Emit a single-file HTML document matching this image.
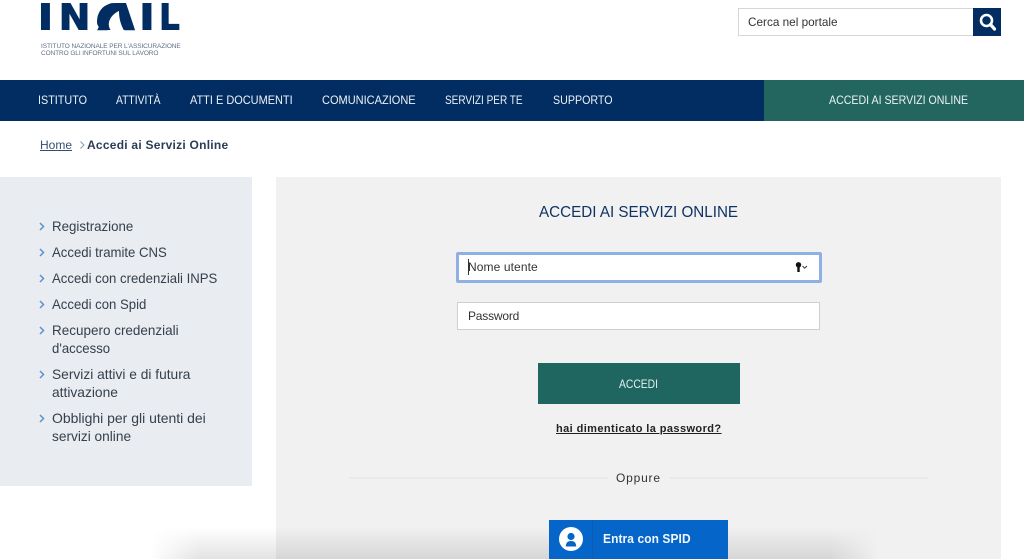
<!DOCTYPE html>
<html lang="it">
<head>
<meta charset="utf-8">
<title>INAIL - Accedi ai Servizi Online</title>
<style>
html,body{margin:0;padding:0;width:1024px;height:559px;overflow:hidden;background:#fff}
body{position:relative;font-family:"Liberation Sans",sans-serif;color:#2e3a47}
.t,.a{position:absolute;white-space:nowrap}
.a{display:block}
.t{line-height:18px;transform-origin:left center}
.nav{position:absolute;left:0;top:80px;width:1024px;height:41px;background:#012d62}
.nav .t{top:11px;color:#eef2f6;font-size:12px}
.green{position:absolute;left:764px;top:0;width:260px;height:41px;background:#22665f}
.side{position:absolute;left:0;top:177px;width:252px;height:309px;background:#e9ecf1}
.side .t{left:52px;font-size:14px;color:#35404c;transform:scaleX(.94)}
.side svg{position:absolute;left:39px}
.panel{position:absolute;left:276px;top:177px;width:725px;height:382px;background:#f1f1f2}
.input{position:absolute;background:#fff;box-sizing:border-box}
.shade{position:absolute;left:150px;top:527px;width:730px;height:32px;background:linear-gradient(to bottom,rgba(0,0,0,0),rgba(0,0,0,.11));-webkit-mask-image:linear-gradient(to right,transparent 0,#000 50px,#000 680px,transparent 100%);mask-image:linear-gradient(to right,transparent 0,#000 50px,#000 680px,transparent 100%)}
</style>
</head>
<body>

<svg class="a" style="left:0;top:0" width="200" height="40" viewBox="0 0 200 40">
  <g fill="#012d62" stroke="#012d62" font-family="'DejaVu Sans',sans-serif" font-weight="700" font-size="36" text-anchor="middle">
    <text transform="translate(45.500 29.700) scale(1.150 1)" stroke-width="1">I</text>
    <text transform="translate(74.500 29.700) scale(1.050 1)" stroke-width="1">N</text>
    <text transform="translate(116 29.700) scale(1.300 1)" stroke-width="1">A</text>
    <text transform="translate(147 29.700) scale(1.150 1)" stroke-width="1">I</text>
    <text transform="translate(169.500 29.700) scale(.9 1)" stroke-width="1">L</text>
  </g>
  <path d="M97 22C97 11 104 3 116 3L126 3L135 30L104 30C100 29 97 26 97 22Z" fill="#012d62"/>
  <path d="M119 11C110 15 106 24 111 30.500L124 30.500C120.500 24 119 18 119 11Z" fill="#fff"/>
</svg>
<div class="t" style="left:41px;top:43px;font-size:6.500px;line-height:7px;letter-spacing:-.09px;color:#5f7084">ISTITUTO NAZIONALE PER L'ASSICURAZIONE<br>CONTRO GLI INFORTUNI SUL LAVORO</div>

<div class="input" style="left:738px;top:8px;width:236px;height:28px;border:1px solid #d4d6d8"></div>
<div class="t" style="left:748px;top:13px;font-size:12px;transform:scaleX(.98);color:#333">Cerca nel portale</div>
<div class="a" style="left:973px;top:8px;width:28px;height:28px;background:#012d62"></div>
<svg class="a" style="left:973px;top:8px" width="28" height="28" viewBox="0 0 28 28">
  <circle cx="13.500" cy="12.500" r="5.500" fill="none" stroke="#fff" stroke-width="2.600"/>
  <path d="M17.500 16.500L21.500 21" stroke="#fff" stroke-width="3.200" stroke-linecap="round"/>
</svg>

<nav class="nav">
  <span class="t" style="left:38px;transform:scaleX(.9)">ISTITUTO</span>
  <span class="t" style="left:116px;transform:scaleX(.86)">ATTIVITÀ</span>
  <span class="t" style="left:190px;transform:scaleX(.913)">ATTI E DOCUMENTI</span>
  <span class="t" style="left:322px;transform:scaleX(.918)">COMUNICAZIONE</span>
  <span class="t" style="left:445px;transform:scaleX(.835)">SERVIZI PER TE</span>
  <span class="t" style="left:553px;transform:scaleX(.89)">SUPPORTO</span>
  <div class="green"><span class="t" style="left:65px;transform:scaleX(.885)">ACCEDI AI SERVIZI ONLINE</span></div>
</nav>

<div class="t" style="left:40px;top:136px;font-size:12px;color:#35506f;text-decoration:underline">Home</div>
<svg class="a" style="left:79px;top:140px" width="7" height="10" viewBox="0 0 7 10"><path d="M1.500 1.500L5 5L1.500 8.500" fill="none" stroke="#8a97a6" stroke-width="1"/></svg>
<div class="t" style="left:87px;top:136px;font-size:12px;font-weight:700;letter-spacing:.25px;color:#2b3d55">Accedi ai Servizi Online</div>

<aside class="side">
  <svg style="top:45px" width="6" height="9" viewBox="0 0 6 9"><path d="M1 1L4.500 4.500L1 8" fill="none" stroke="#5b93cf" stroke-width="1.500"/></svg>
  <span class="t" style="top:40px;transform:scaleX(.95)">Registrazione</span>
  <svg style="top:71px" width="6" height="9" viewBox="0 0 6 9"><path d="M1 1L4.500 4.500L1 8" fill="none" stroke="#5b93cf" stroke-width="1.500"/></svg>
  <span class="t" style="top:66px">Accedi tramite CNS</span>
  <svg style="top:97px" width="6" height="9" viewBox="0 0 6 9"><path d="M1 1L4.500 4.500L1 8" fill="none" stroke="#5b93cf" stroke-width="1.500"/></svg>
  <span class="t" style="top:92px">Accedi con credenziali INPS</span>
  <svg style="top:123px" width="6" height="9" viewBox="0 0 6 9"><path d="M1 1L4.500 4.500L1 8" fill="none" stroke="#5b93cf" stroke-width="1.500"/></svg>
  <span class="t" style="top:118px">Accedi con Spid</span>
  <svg style="top:149px" width="6" height="9" viewBox="0 0 6 9"><path d="M1 1L4.500 4.500L1 8" fill="none" stroke="#5b93cf" stroke-width="1.500"/></svg>
  <span class="t" style="top:144px;transform:scaleX(.963)">Recupero credenziali</span>
  <span class="t" style="top:162px">d'accesso</span>
  <svg style="top:193px" width="6" height="9" viewBox="0 0 6 9"><path d="M1 1L4.500 4.500L1 8" fill="none" stroke="#5b93cf" stroke-width="1.500"/></svg>
  <span class="t" style="top:188px;transform:scaleX(.983)">Servizi attivi e di futura</span>
  <span class="t" style="top:206px;transform:scaleX(.985)">attivazione</span>
  <svg style="top:237px" width="6" height="9" viewBox="0 0 6 9"><path d="M1 1L4.500 4.500L1 8" fill="none" stroke="#5b93cf" stroke-width="1.500"/></svg>
  <span class="t" style="top:232px;transform:scaleX(.998)">Obblighi per gli utenti dei</span>
  <span class="t" style="top:250px;transform:scaleX(.977)">servizi online</span>
</aside>

<main class="panel"></main>

<div class="t" style="left:539px;top:204px;font-size:16px;transform:scaleX(.95);color:#0f3463">ACCEDI AI SERVIZI ONLINE</div>

<div class="input" style="left:456px;top:252px;width:366px;height:31px;border:3px solid #8fb0e3;border-radius:2px"></div>
<div class="a" style="left:468px;top:259px;width:1px;height:16px;background:#333"></div>
<div class="t" style="left:468px;top:258px;font-size:12px;letter-spacing:.1px;color:#333">Nome utente</div>
<svg class="a" style="left:794px;top:261px" width="16" height="12" viewBox="0 0 16 12">
  <circle cx="4.500" cy="3.800" r="2.700" fill="#111"/>
  <path d="M3.300 4.500L3.300 11L5.700 11L5.700 4.500Z" fill="#111"/>
  <path d="M8.500 5L10.700 7.200L12.900 5" fill="none" stroke="#333" stroke-width="1"/>
</svg>

<div class="input" style="left:457px;top:302px;width:363px;height:28px;border:1px solid #cfcfcf"></div>
<div class="t" style="left:468px;top:307px;font-size:12px;letter-spacing:-.2px;color:#333">Password</div>

<div class="a" style="left:538px;top:363px;width:202px;height:41px;background:#1f6661"></div>
<div class="t" style="left:619px;top:375px;font-size:12px;transform:scaleX(.86);color:#e6f0ee">ACCEDI</div>

<div class="t" style="left:556px;top:420px;font-size:11px;font-weight:700;letter-spacing:.41px;color:#222;text-decoration:underline">hai dimenticato la password?</div>

<div class="a" style="left:349px;top:477px;width:579px;height:2px;background:#e9e9ea"></div>
<div class="a" style="left:608px;top:468px;width:62px;height:20px;background:#f1f1f2"></div>
<div class="t" style="left:616px;top:469px;font-size:12px;letter-spacing:.8px;color:#333">Oppure</div>

<div class="shade"></div>

<div class="a" style="left:549px;top:520px;width:179px;height:39px;background:#0565c9"></div>
<div class="a" style="left:592px;top:520px;width:1px;height:39px;background:#0f5cb3"></div>
<svg class="a" style="left:558px;top:526px" width="26" height="26" viewBox="0 0 26 26">
  <circle cx="13" cy="13" r="12" fill="#fff"/>
  <circle cx="13" cy="10.500" r="3.600" fill="#0565c9"/>
  <path d="M7.800 20.500C7.800 16.500 10 15 13 15C16 15 18.200 16.500 18.200 20.500Z" fill="#0565c9"/>
</svg>
<div class="t" style="left:603px;top:530px;font-size:13px;font-weight:700;letter-spacing:.1px;transform:scaleX(.92);color:#f2f7fd">Entra con SPID</div>

</body>
</html>
